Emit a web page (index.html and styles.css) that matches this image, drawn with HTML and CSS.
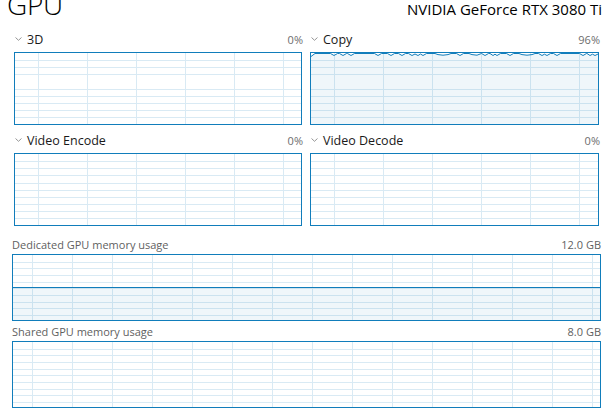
FILE: index.html
```html
<!DOCTYPE html>
<html>
<head>
<meta charset="utf-8">
<link rel="stylesheet" href="styles.css">
</head>
<body>
<div class="page">
  <div class="header">
    <div class="title">GPU</div>
    <div class="device">NVIDIA GeForce RTX 3080 Ti</div>
  </div>

  <div class="engines">
    <div class="engine">
      <div class="engine-head">
        <svg class="chev" width="7" height="4" viewBox="0 0 7 4"><polyline points="0.5,0.5 3.5,3.3 6.5,0.5" fill="none" stroke="#8a8a8a" stroke-width="0.9"/></svg>
        <span class="engine-name">3D</span>
        <span class="pct">0%</span>
      </div>
      <div class="graph engine-graph"></div>
    </div>

    <div class="engine">
      <div class="engine-head">
        <svg class="chev" width="7" height="4" viewBox="0 0 7 4"><polyline points="0.5,0.5 3.5,3.3 6.5,0.5" fill="none" stroke="#8a8a8a" stroke-width="0.9"/></svg>
        <span class="engine-name">Copy</span>
        <span class="pct">96%</span>
      </div>
      <div class="graph engine-graph">
        <svg class="usage" viewBox="0 0 287 71" preserveAspectRatio="none">
          <polygon class="usage-fill" points="0,3.5 4,0.5 19.5,0.5 23,2.5 26.5,0.5 28.5,0.5 32,2.5 35.5,0.5 36.5,0.5 40,2.5 43.5,0.5 63.5,0.5 67,2.5 70.5,0.5 76.5,0.5 80,2.5 83.5,0.5 87.5,0.5 91,2.5 94.5,0.5 97.5,0.5 101,2.5 104,1 107,2.5 109.5,1 112,2.5 115.5,0.5 124,0.5 127,1.6 132,2.2 137,1.6 140,0.5 145.5,0.5 149,2.5 152.5,0.5 158,0.5 161,1.6 166,2.2 170.5,0.5 174,2.5 177.5,0.5 179,0.5 182,2.5 184,1.2 186,2.5 189.5,0.5 195.5,0.5 199,2.5 202.5,0.5 208,0.5 211,1.6 216,2.2 221,1.6 224,0.5 227.5,0.5 231,2.5 233.5,1.2 236,2.5 239.5,0.5 242.5,0.5 246,2.5 249.5,0.5 268.5,0.5 272,2.5 275.5,0.5 276,0.5 279,2.5 281.5,1.2 284,2.5 287,1 287,71 0,71"/>
          <polyline class="usage-line" points="0,3.5 4,0.5 19.5,0.5 23,2.5 26.5,0.5 28.5,0.5 32,2.5 35.5,0.5 36.5,0.5 40,2.5 43.5,0.5 63.5,0.5 67,2.5 70.5,0.5 76.5,0.5 80,2.5 83.5,0.5 87.5,0.5 91,2.5 94.5,0.5 97.5,0.5 101,2.5 104,1 107,2.5 109.5,1 112,2.5 115.5,0.5 124,0.5 127,1.6 132,2.2 137,1.6 140,0.5 145.5,0.5 149,2.5 152.5,0.5 158,0.5 161,1.6 166,2.2 170.5,0.5 174,2.5 177.5,0.5 179,0.5 182,2.5 184,1.2 186,2.5 189.5,0.5 195.5,0.5 199,2.5 202.5,0.5 208,0.5 211,1.6 216,2.2 221,1.6 224,0.5 227.5,0.5 231,2.5 233.5,1.2 236,2.5 239.5,0.5 242.5,0.5 246,2.5 249.5,0.5 268.5,0.5 272,2.5 275.5,0.5 276,0.5 279,2.5 281.5,1.2 284,2.5 287,1"/>
        </svg>
      </div>
    </div>

    <div class="engine">
      <div class="engine-head">
        <svg class="chev" width="7" height="4" viewBox="0 0 7 4"><polyline points="0.5,0.5 3.5,3.3 6.5,0.5" fill="none" stroke="#8a8a8a" stroke-width="0.9"/></svg>
        <span class="engine-name">Video Encode</span>
        <span class="pct">0%</span>
      </div>
      <div class="graph engine-graph"></div>
    </div>

    <div class="engine">
      <div class="engine-head">
        <svg class="chev" width="7" height="4" viewBox="0 0 7 4"><polyline points="0.5,0.5 3.5,3.3 6.5,0.5" fill="none" stroke="#8a8a8a" stroke-width="0.9"/></svg>
        <span class="engine-name">Video Decode</span>
        <span class="pct">0%</span>
      </div>
      <div class="graph engine-graph"></div>
    </div>
  </div>

  <div class="memory dedicated">
    <div class="memory-head">
      <span>Dedicated GPU memory usage</span>
      <span>12.0 GB</span>
    </div>
    <div class="graph memory-graph">
      <div class="memory-fill"></div>
    </div>
  </div>

  <div class="memory shared">
    <div class="memory-head">
      <span>Shared GPU memory usage</span>
      <span>8.0 GB</span>
    </div>
    <div class="graph memory-graph"></div>
  </div>
</div>
</body>
</html>
```

FILE: styles.css
```css
html, body {
  margin: 0;
  padding: 0;
  background: #ffffff;
}

body {
  width: 608px;
  height: 418px;
  overflow: hidden;
  font-family: "Open Sans", "Noto Sans", sans-serif;
  color: #000;
}

.page {
  padding: 0 7px 0 12px;
}

.header {
  display: flex;
  justify-content: space-between;
  align-items: baseline;
  margin-top: -11px;
  margin-left: -5px;
  height: 30px;
}

.title {
  font-size: 28px;
  font-weight: 300;
  line-height: 30px;
  letter-spacing: -0.3px;
}

.device {
  font-size: 15px;
  line-height: 30px;
  font-weight: 400;
  margin-right: -1px;
}

.engines {
  display: grid;
  grid-template-columns: 288px 289px;
  column-gap: 8px;
  row-gap: 7px;
  margin-top: 12px;
  margin-left: 2px;
}

.engine-head {
  display: flex;
  align-items: center;
  height: 16px;
  padding-top: 1px;
  margin-bottom: 4px;
}

.chev {
  display: block;
  margin-left: 1px;
  margin-right: 5px;
  margin-top: -2px;
}

.engine-name {
  font-size: 12.5px;
  line-height: 16px;
  color: #1a1a1a;
}

.pct {
  margin-left: auto;
  margin-right: -1px;
  font-size: 11px;
  line-height: 16px;
  color: #6d6d6d;
}

.graph {
  box-sizing: border-box;
  border: 1px solid #117dbb;
  background-color: #ffffff;
}

.engine-graph {
  height: 73px;
  background-image:
    repeating-linear-gradient(to right, transparent 0 47.88px, #d9eaf4 47.88px 48.88px),
    repeating-linear-gradient(to bottom, transparent 0 6.125px, #d9eaf4 6.125px 7.125px);
  background-size: calc(100% + 60px) 100%, 100% 100%;
  background-position: -24.6px 0, 0 1px;
  background-repeat: no-repeat, no-repeat;
}

.usage {
  display: block;
  width: 100%;
  height: 100%;
}

.usage-fill {
  fill: rgba(17, 125, 187, 0.065);
  stroke: none;
}

.usage-line {
  fill: none;
  stroke: #117dbb;
  stroke-width: 1;
  vector-effect: non-scaling-stroke;
}

.memory {
  margin-top: 11px;
}

.memory.shared {
  margin-top: 3px;
}

.memory-head {
  display: flex;
  justify-content: space-between;
  font-size: 11px;
  line-height: 15px;
  color: #5f5f5f;
  margin-bottom: 2px;
}

.memory-graph {
  height: 67px;
  display: flex;
  flex-direction: column;
  justify-content: flex-end;
  background-image:
    repeating-linear-gradient(to right, transparent 0 39px, #d9eaf4 39px 40px),
    repeating-linear-gradient(to bottom, transparent 0 5.67px, #d9eaf4 5.67px 6.67px);
  background-size: calc(100% + 60px) 100%, 100% 100%;
  background-position: -20px 0, 0 0.5px;
  background-repeat: no-repeat, no-repeat;
}

.memory-fill {
  box-sizing: border-box;
  height: 33px;
  border-top: 1px solid #117dbb;
  background: rgba(17, 125, 187, 0.065);
}
```
